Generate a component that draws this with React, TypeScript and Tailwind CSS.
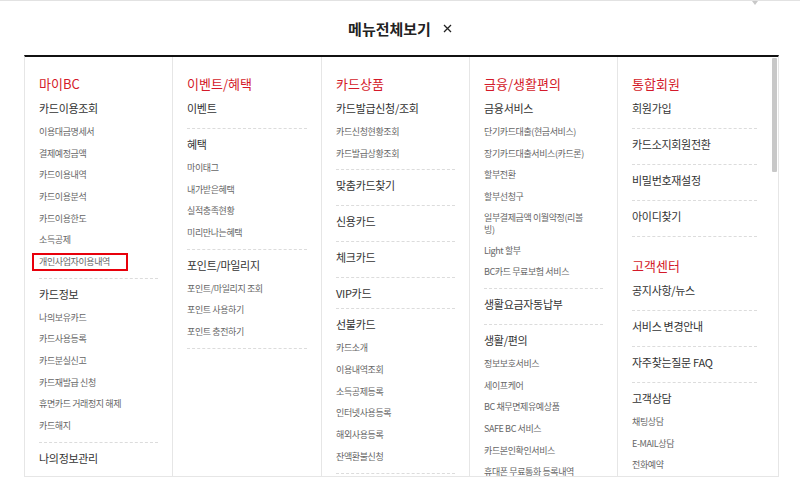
import React from "react";

type Item = string;
type Group = { title: string; items?: Item[]; tight?: boolean; boxed?: string };
type Section = { heading: string; groups: Group[] };

const columns: Section[][] = [
  [
    {
      heading: "마이BC",
      groups: [
        {
          title: "카드이용조회",
          items: ["이용대금명세서", "결제예정금액", "카드이용내역", "카드이용분석", "카드이용한도", "소득공제", "개인사업자이용내역"],
          boxed: "개인사업자이용내역",
        },
        {
          title: "카드정보",
          items: ["나의보유카드", "카드사용등록", "카드분실신고", "카드재발급 신청", "휴면카드 거래정지 해제", "카드해지"],
        },
        { title: "나의정보관리" },
      ],
    },
  ],
  [
    {
      heading: "이벤트/혜택",
      groups: [
        { title: "이벤트" },
        { title: "혜택", items: ["마이태그", "내가받은혜택", "실적충족현황", "미리만나는혜택"] },
        { title: "포인트/마일리지", items: ["포인트/마일리지 조회", "포인트 사용하기", "포인트 충전하기"] },
      ],
    },
  ],
  [
    {
      heading: "카드상품",
      groups: [
        { title: "카드발급신청/조회", items: ["카드신청현황조회", "카드발급상황조회"] },
        { title: "맞춤카드찾기" },
        { title: "신용카드" },
        { title: "체크카드" },
        { title: "VIP카드", tight: true },
        { title: "선불카드", items: ["카드소개", "이용내역조회", "소득공제등록", "인터넷사용등록", "해외사용등록", "잔액환불신청"] },
      ],
    },
  ],
  [
    {
      heading: "금융/생활편의",
      groups: [
        {
          title: "금융서비스",
          items: [
            "단기카드대출(현금서비스)",
            "장기카드대출서비스(카드론)",
            "할부전환",
            "할부선청구",
            "일부결제금액 이월약정(리볼\n빙)",
            "Light 할부",
            "BC카드 무료보험 서비스",
          ],
        },
        { title: "생활요금자동납부" },
        {
          title: "생활/편의",
          items: ["정보보호서비스", "세이프케어", "BC 채무면제유예상품", "SAFE BC 서비스", "카드본인확인서비스", "휴대폰 무료통화 등록내역"],
        },
      ],
    },
  ],
  [
    {
      heading: "통합회원",
      groups: [{ title: "회원가입" }, { title: "카드소지회원전환" }, { title: "비밀번호재설정" }, { title: "아이디찾기" }],
    },
    {
      heading: "고객센터",
      groups: [
        { title: "공지사항/뉴스" },
        { title: "서비스 변경안내" },
        { title: "자주찾는질문 FAQ" },
        { title: "고객상담", items: ["채팅상담", "E-MAIL상담", "전화예약"] },
      ],
    },
  ],
];

function GroupBlock({ g, first }: { g: Group; first: boolean }) {
  const hasItems = !!g.items && g.items.length > 0;
  return (
    <div
      className={
        "border-b border-dashed border-[#dcdcdc] " +
        (first ? "pt-0 " : "pt-[5px] ") +
        (hasItems ? "pb-[5px]" : g.tight ? "pb-[5px]" : "pb-[10px]")
      }
    >
      <div className="text-[11px] leading-[20px] tracking-[-0.3px] text-[#333] whitespace-nowrap">{g.title}</div>
      {hasItems && (
        <ul className="mt-[3px]">
          {g.items!.map((it) => (
            <li
              key={it}
              className="relative min-h-[21.7px] py-[4px] flex items-center text-[9px] leading-[12px] tracking-[-0.4px] text-[#666] whitespace-pre-line"
            >
              {it}
              {g.boxed === it && (
                <span className="absolute left-[-7px] top-[1.9px] w-[96px] h-[18px] border-2 border-[#e8000b]" />
              )}
            </li>
          ))}
        </ul>
      )}
    </div>
  );
}

function SectionBlock({ s, first }: { s: Section; first: boolean }) {
  return (
    <div className={first ? "" : "mt-[19px]"}>
      <div className="text-[13px] leading-[20px] text-[#d41a2a] mb-[4px] whitespace-nowrap">{s.heading}</div>
      {s.groups.map((g, i) => (
        <GroupBlock key={g.title} g={g} first={i === 0} />
      ))}
    </div>
  );
}

export default function App() {
  const widths = ["w-[148px]", "w-[149px]", "w-[148px]", "w-[148px]"];
  return (
    <div className="relative w-[800px] h-[492px] overflow-hidden bg-white font-['Noto_Sans_CJK_KR','Noto_Sans',sans-serif] border-t border-[#e2e2e2]">
      <span className="absolute left-[752px] top-0 w-0 h-0 border-l-[3px] border-r-[3px] border-t-[4px] border-l-transparent border-r-transparent border-t-[#c8c8c8]" />
      <div className="h-[54px] flex items-center justify-center gap-[12px]">
        <span className="text-[15px] font-bold text-[#222] leading-none">메뉴전체보기</span>
        <svg width="9" height="9" viewBox="0 0 9 9" className="mt-[1px]">
          <path d="M1 1L8 8M8 1L1 8" stroke="#222" strokeWidth="1.3" />
        </svg>
      </div>
      <div className="ml-[24px] w-[755px] h-[422px] border-t-2 border-t-[#111] border-l border-r border-b border-[#e6e6e6] flex">
        {columns.map((col, ci) => (
          <div
            key={ci}
            className={
              "h-full overflow-hidden pl-[14px] pr-[14px] pt-[17px] " +
              (ci < 4 ? widths[ci] + " border-r border-[#e6e6e6]" : "flex-1")
            }
          >
            {col.map((s, si) => (
              <SectionBlock key={s.heading} s={s} first={si === 0} />
            ))}
          </div>
        ))}
        <div className="w-[7px] h-full pt-[1px] pl-[1px]">
          <div className="w-[5px] h-[114px] bg-[#c8c8c8] rounded-[1px]" />
        </div>
      </div>
    </div>
  );
}
